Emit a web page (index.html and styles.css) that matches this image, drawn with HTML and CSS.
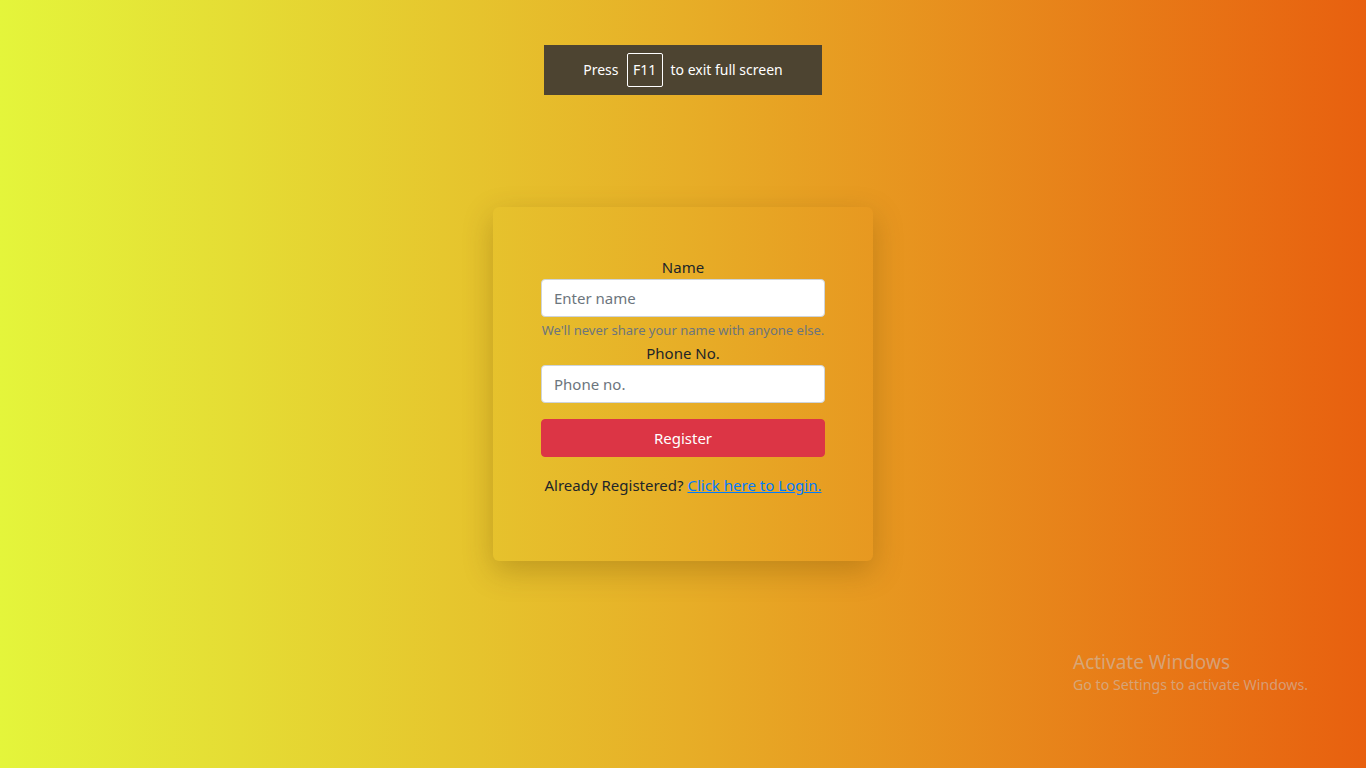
FILE: index.html
```html
<!DOCTYPE html>
<html lang="en">
<head>
<meta charset="utf-8">
<title>Register</title>
<link rel="stylesheet" href="styles.css">
</head>
<body>
<main class="page">
  <div class="card">
    <form class="form">
      <label class="label" for="name">Name</label>
      <input class="input" id="name" type="text" placeholder="Enter name">
      <small class="hint">We'll never share your name with anyone else.</small>
      <label class="label" for="phone">Phone No.</label>
      <input class="input" id="phone" type="text" placeholder="Phone no.">
      <button class="btn" type="button">Register</button>
      <p class="login">Already Registered? <a href="#" class="link">Click here to Login.</a></p>
    </form>
  </div>
</main>
<div class="toast">Press <span class="key">F11</span> to exit full screen</div>
<div class="watermark">
  <div class="wm-title">Activate Windows</div>
  <div class="wm-sub">Go to Settings to activate Windows.</div>
</div>
</body>
</html>
```
FILE: styles.css
```css
* { box-sizing: border-box; }
html, body { margin: 0; height: 100%; }
body {
  font-family: "Noto Sans", "Open Sans", sans-serif;
  font-size: 15px;
  line-height: 24px;
  color: #212529;
  background: linear-gradient(to right, #e4f53b 0%, #e7ae27 50%, #e8600f 100%);
  overflow: hidden;
}
.page {
  min-height: 100vh;
  display: flex;
  align-items: center;
  justify-content: center;
}
.card {
  width: 380px;
  padding: 48px 48px 48px;
  border-radius: 6px;
  box-shadow: 0 10px 30px rgba(90, 60, 0, 0.28);
}
.form {
  display: flex;
  flex-direction: column;
  align-items: stretch;
  text-align: center;
}
.label { display: block; height: 24px; }
.input {
  height: 38px;
  width: 100%;
  border: 1px solid #ced4da;
  border-radius: 4px;
  background: #fff;
  padding: 6px 12px;
  font: inherit;
  font-size: 15px;
  color: #495057;
}
.input::placeholder { color: #6c757d; opacity: 1; }
.hint {
  display: block;
  margin-top: 3px;
  font-size: 13px;
  line-height: 21px;
  color: #6c757d;
  white-space: nowrap;
}
.btn {
  margin-top: 16px;
  height: 38px;
  border: 1px solid #dc3545;
  border-radius: 4px;
  background: #dc3545;
  color: #fff;
  font: inherit;
  font-size: 15px;
}
.login { margin: 16px 0 16px; white-space: nowrap; }
.link { color: #007bff; text-decoration: underline; }
.toast {
  position: absolute;
  top: 45px;
  left: 544px;
  width: 278px;
  height: 50px;
  display: flex;
  align-items: center;
  justify-content: center;
  gap: 8px;
  background: #4d4431;
  color: #fff;
  font-size: 14px;
}
.key {
  display: inline-flex;
  align-items: center;
  justify-content: center;
  width: 36px;
  height: 34px;
  border: 1px solid #fff;
  border-radius: 2px;
}
.watermark {
  position: absolute;
  left: 1073px;
  top: 649px;
  color: rgba(200, 200, 200, 0.55);
}
.wm-title { font-size: 19px; line-height: 26px; }
.wm-sub { font-size: 14.2px; line-height: 20px; }
```
